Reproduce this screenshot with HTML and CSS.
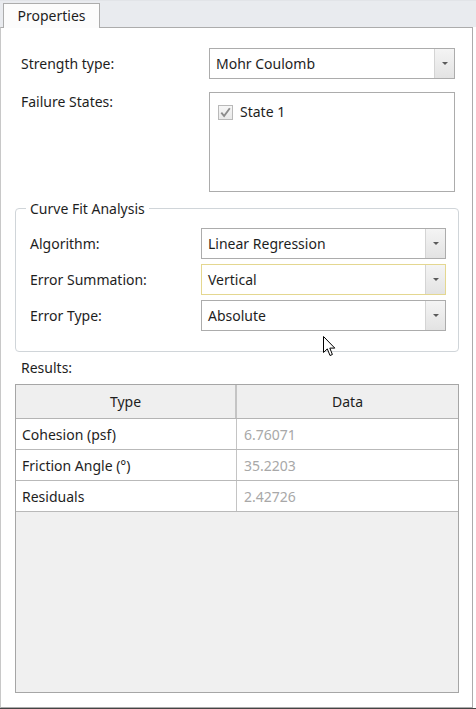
FILE: index.html
```html
<!DOCTYPE html>
<html>
<head>
<meta charset="utf-8">
<link rel="stylesheet" href="styles.css">
</head>
<body>
<div class="window">
  <div class="tabstrip">
    <div class="tab">Properties</div>
  </div>
  <div class="panel">
    <div class="row">
      <div class="label">Strength type:</div>
      <div class="combo"><span class="combo-text">Mohr Coulomb</span><span class="combo-btn"><i class="tri"></i></span></div>
    </div>
    <div class="row row-list">
      <div class="label">Failure States:</div>
      <div class="listbox">
        <div class="check-item">
          <span class="checkbox"><svg width="13" height="13" viewBox="0 0 13 13"><path d="M2.3 6.6 L5.1 10 L10.8 2.2" fill="none" stroke="#8c8c8c" stroke-width="1.9"/></svg></span>
          <span>State 1</span>
        </div>
      </div>
    </div>
    <fieldset class="group">
      <legend class="legend">Curve Fit Analysis</legend>
      <div class="grow">
        <div class="label">Algorithm:</div>
        <div class="combo"><span class="combo-text">Linear Regression</span><span class="combo-btn"><i class="tri"></i></span></div>
      </div>
      <div class="grow">
        <div class="label">Error Summation:</div>
        <div class="combo combo-hover"><span class="combo-text">Vertical</span><span class="combo-btn"><i class="tri"></i></span></div>
      </div>
      <div class="grow">
        <div class="label">Error Type:</div>
        <div class="combo"><span class="combo-text">Absolute</span><span class="combo-btn"><i class="tri"></i></span></div>
      </div>
    </fieldset>
    <div class="results-label">Results:</div>
    <div class="grid">
      <div class="grid-head">
        <div class="hcell">Type</div>
        <div class="hcell hcell-last">Data</div>
      </div>
      <div class="grid-row">
        <div class="cell">Cohesion (psf)</div>
        <div class="cell cell-val">6.76071</div>
      </div>
      <div class="grid-row">
        <div class="cell">Friction Angle (°)</div>
        <div class="cell cell-val">35.2203</div>
      </div>
      <div class="grid-row">
        <div class="cell">Residuals</div>
        <div class="cell cell-val">2.42726</div>
      </div>
      <div class="grid-fill"></div>
    </div>
    <svg class="cursor" width="13" height="21" viewBox="0 0 13 21"><path d="M0.5 0.5 L0.5 16.5 L4.3 12.9 L7 19.5 L9.4 18.5 L6.8 12.1 L11.8 12.1 Z" fill="#fff" stroke="#000" stroke-width="1" stroke-linejoin="miter"/></svg>
  </div>
  <div class="bottom-edge"></div>
</div>
</body>
</html>
```
FILE: styles.css
```css
html, body {
  margin: 0;
  padding: 0;
  background: #ffffff;
}
body {
  font-family: "Noto Sans", "Open Sans", sans-serif;
  font-size: 14px;
  color: #1e1e1e;
  width: 476px;
  height: 709px;
  overflow: hidden;
}
.window {
  display: flex;
  flex-direction: column;
  height: 709px;
  width: 476px;
}
.tabstrip {
  height: 27px;
  background: #e9ebef;
  display: flex;
  align-items: flex-end;
  padding-left: 3px;
  border-top: 1px solid #e2e4e8;
  box-sizing: border-box;
}
.tab {
  width: 97px;
  height: 25px;
  box-sizing: border-box;
  background: #fcfcfc;
  border: 1px solid #acacac;
  border-bottom: none;
  margin-bottom: -1px;
  position: relative;
  z-index: 2;
  text-align: center;
  line-height: 24px;
  font-size: 14px;
  color: #1e1e1e;
}
.panel {
  position: relative;
  width: 473px;
  box-sizing: border-box;
  flex: 1;
  border: 1px solid #acacac;
  border-left-color: #c8c8c8;
  background: #fff;
  display: flex;
  flex-direction: column;
  padding: 20px 13px 14px 14px;
}
.bottom-edge {
  height: 1px;
  background: #444;
}
.row {
  display: grid;
  grid-template-columns: 188px 246px;
  align-items: center;
  padding-left: 6px;
}
.row-list {
  margin-top: 13px;
  align-items: start;
}
.row-list .label {
  line-height: 20px;
}
.label {
  white-space: nowrap;
  line-height: 18px;
}
.combo {
  height: 31px;
  box-sizing: border-box;
  border: 1px solid #acacac;
  background: #fff;
  display: flex;
  align-items: stretch;
}
.combo-hover {
  border-color: #e4d790;
}
.combo-text {
  flex: 1;
  padding-left: 6px;
  line-height: 29px;
  white-space: nowrap;
}
.combo-btn {
  width: 19px;
  border-left: 1px solid #d4d4d4;
  background: linear-gradient(#f4f4f4, #e3e3e3);
  display: flex;
  align-items: center;
  justify-content: center;
}
.tri {
  width: 0;
  height: 0;
  border-left: 3.5px solid transparent;
  border-right: 3.5px solid transparent;
  border-top: 3px solid #5a5a5a;
}
.listbox {
  height: 100px;
  box-sizing: border-box;
  border: 1px solid #acacac;
  padding: 9px 8px;
}
.check-item {
  display: flex;
  align-items: center;
  gap: 7px;
  line-height: 20px;
}
.checkbox {
  width: 15px;
  height: 15px;
  box-sizing: border-box;
  border: 1px solid #b9b9b9;
  background: linear-gradient(#f6f6f6, #e9e9e9);
  display: flex;
  align-items: center;
  justify-content: center;
}
.group {
  margin: 8px 0 0 0;
  padding: 11px 14px 20px 14px;
  border: 1px solid #d0d5d9;
  border-radius: 4px;
  min-width: 0;
}
.legend {
  padding: 0 4px;
  margin-left: -4px;
  line-height: 17px;
}
.grow {
  display: grid;
  grid-template-columns: 171px 245px;
  align-items: center;
}
.grow + .grow {
  margin-top: 5px;
}
.results-label {
  margin-top: 7px;
  padding-left: 6px;
  line-height: 18px;
  margin-bottom: 7px;
}
.grid {
  flex: 1;
  border: 1px solid #a6a6a6;
  background: #f0f0f0;
  display: flex;
  flex-direction: column;
}
.grid-head {
  display: grid;
  grid-template-columns: 221px 1fr;
  height: 33px;
  background: #efefef;
  border-bottom: 1px solid #b4b4b4;
}
.hcell {
  display: flex;
  align-items: center;
  justify-content: center;
  border-right: 2px solid #c4c4c4;
}
.hcell-last {
  border-right: none;
}
.grid-row {
  display: grid;
  grid-template-columns: 221px 1fr;
  height: 30px;
  background: #fff;
  border-bottom: 1px solid #b9b9b9;
}
.cell {
  display: flex;
  align-items: center;
  padding-left: 6px;
  border-right: 1px solid #c4c4c4;
  white-space: nowrap;
}
.cell-val {
  border-right: none;
  color: #a8a8a8;
  padding-left: 7px;
}
.grid-fill {
  flex: 1;
}
.cursor {
  position: absolute;
  left: 322px;
  top: 308px;
}
```
